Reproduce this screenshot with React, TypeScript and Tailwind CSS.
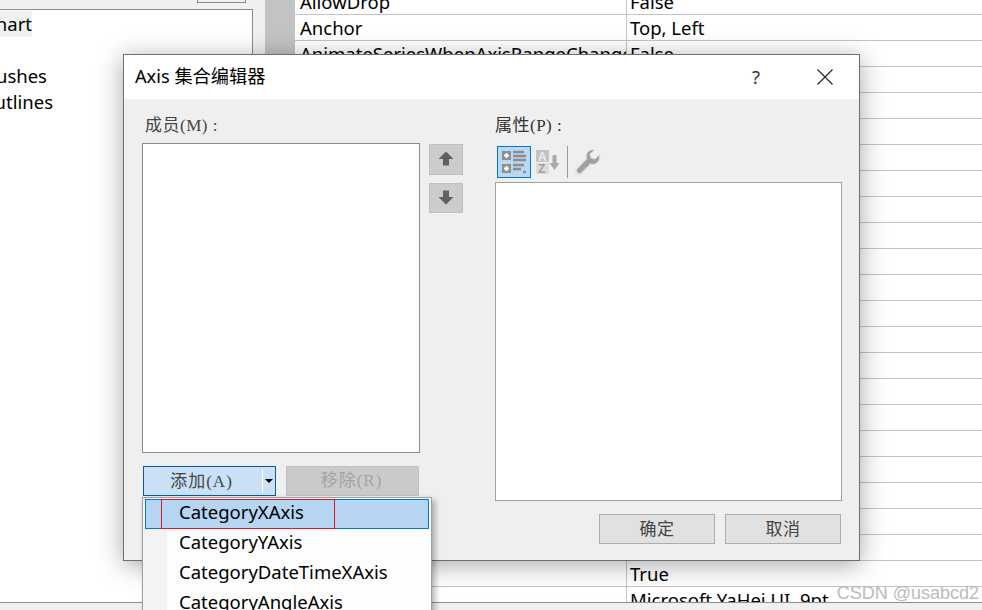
const sans = "font-['Noto_Sans','Noto_Sans_CJK_SC',sans-serif]";
const serifLabel = "font-['Liberation_Serif','Noto_Sans_CJK_SC',serif]";

const rows: [string, string][] = [
  ['AllowDrop', 'False'],
  ['Anchor', 'Top, Left'],
  ['AnimateSeriesWhenAxisRangeChanged', 'False'],
  ...Array.from({ length: 19 }, (): [string, string] => ['', '']),
  ['', 'True'],
  ['', 'Microsoft YaHei UI, 9pt'],
];

function CategorizedIcon() {
  return (
    <svg width="26" height="26" viewBox="0 0 26 26">
      <rect x="1" y="2" width="9" height="9" fill="#8f8f8f" />
      <path d="M3 6.500h5M5.500 4v5" stroke="#fff" strokeWidth="1.800" />
      <rect x="1" y="15" width="9" height="9" fill="#8f8f8f" />
      <path d="M3 19.500h5M5.500 17v5" stroke="#fff" strokeWidth="1.800" />
      <path d="M12 3h11M12 7h13M12 11h13M12 16h11M12 20h8M22 23h3" stroke="#8c8c8c" strokeWidth="2.400" />
    </svg>
  );
}

function SortIcon() {
  return (
    <svg width="26" height="26" viewBox="0 0 26 26">
      <rect x="1" y="1" width="13" height="12" fill="#c4c4c4" />
      <rect x="1" y="14" width="13" height="11" fill="#dcdcdc" />
      <text x="3" y="11.500" fontSize="12" fontWeight="700" fill="#ececec" fontFamily="Liberation Sans">A</text>
      <text x="3" y="24" fontSize="12" fontWeight="700" fill="#a0a0a0" fontFamily="Liberation Sans">Z</text>
      <path d="M19.500 6v12" stroke="#a9a9a9" strokeWidth="4" />
      <path d="M14.500 14l5 7 5-7z" fill="#a9a9a9" />
    </svg>
  );
}

function WrenchIcon() {
  return (
    <svg width="26" height="26" viewBox="0 0 26 26">
      <g fill="none" strokeLinecap="round">
        <path d="M4.500 21.500L14 12" stroke="#dcdcdc" strokeWidth="8" />
        <path d="M4.500 21.500L14 12" stroke="#a0a0a0" strokeWidth="5" />
      </g>
      <path
        d="M24.500 5.500l-4.500 4.500-4-1-1-4 4.500-4C14 0 10 4 11.500 9.500L13 14l3 1c5 1.500 10-3.500 8.500-9.500z"
        fill="#a0a0a0"
        stroke="#dcdcdc"
        strokeWidth="1"
      />
      <path d="M8 18l6-6" stroke="#a0a0a0" strokeWidth="5" />
    </svg>
  );
}

function ArrowButton({ down, h }: { down?: boolean; h: string }) {
  return (
    <div className={`flex w-[34px] items-center justify-center border border-[#c0c0c0] bg-[#cccccc] pb-[2px] ${h}`}>
      <svg width="16" height="15" viewBox="0 0 16 15" className={down ? 'rotate-180' : ''}>
        <path d="M8 0.500L0.500 8h4.500v6.500h6V8h4.500z" fill="#606060" />
      </svg>
    </div>
  );
}

function DialogButton({ label }: { label: string }) {
  return (
    <button className="h-[30px] w-[116px] border border-[#adadad] bg-[#e1e1e1] pb-[2px] text-[17px] leading-none tracking-[0.5px] text-[#444]">
      {label}
    </button>
  );
}

export default function App() {
  return (
    <div className={`relative flex h-[610px] w-[982px] flex-col overflow-hidden bg-white ${sans} text-[18.5px] text-black`}>
      <div className="flex h-[602px] shrink-0">
        {/* Left tree panel */}
        <div className="flex w-[265px] shrink-0 flex-col bg-[#f0f0f0]">
          <div className="h-[9px] shrink-0">
            <div className="ml-[197px] h-[3px] w-[49px] border border-t-0 border-[#8a8a8a]" />
          </div>
          <div className="flex w-[253px] flex-1 flex-col border-t border-r border-[#8a8a94] bg-white pt-[1px] leading-[26px]">
            <div className="flex h-[26px] w-[32px] justify-end overflow-hidden whitespace-nowrap bg-[#f0f0f0]">Chart</div>
            <div className="h-[26px]" />
            <div className="flex h-[26px] w-[47px] justify-end overflow-hidden whitespace-nowrap">Brushes</div>
            <div className="flex h-[26px] w-[53px] justify-end overflow-hidden whitespace-nowrap">Outlines</div>
          </div>
        </div>
        <div className="w-[30px] shrink-0 bg-[#c3c3c3]" />

        {/* Property grid */}
        <div className="min-w-0 flex-1 overflow-hidden">
          <div className="mt-[-11px] flex flex-col">
            {rows.map(([name, value], i) => (
              <div key={i} className="flex h-[26px] shrink-0 border-b border-[#c4c4c4] leading-[26px]">
                <div className="w-[332px] shrink-0 overflow-hidden whitespace-nowrap border-r border-[#c4c4c4] pl-[5px]">{name}</div>
                <div className="overflow-hidden whitespace-nowrap pl-[3px]">{value}</div>
              </div>
            ))}
          </div>
        </div>
      </div>
      <div className="flex-1 border-t border-[#8f8f8f] bg-[#f0f0f0]" />

      {/* Dialog */}
      <div className="absolute left-[123px] top-[54px] h-[507px] w-[737px] border border-[#6f6f6f] bg-[#efefef] shadow-[0_4px_24px_rgba(0,0,0,0.35)]">
        <div className="flex h-[44px] items-center bg-white pl-[11px]">
          <span className="w-[617px] shrink-0 text-[18.2px]">Axis 集合编辑器</span>
          <span className="text-[18.5px] text-[#333]">?</span>
          <svg width="16" height="16" viewBox="0 0 16 16" className="ml-[57px]">
            <path d="M0.500 0.500l15 15M15.500 0.500l-15 15" stroke="#222" strokeWidth="1.100" fill="none" />
          </svg>
        </div>
        <div className="flex pl-[18px] pt-[15px]">
          <div className="flex w-[278px] shrink-0 flex-col">
            <div className={`ml-[3px] h-[29px] pt-[2px] text-[17px] leading-[20px] tracking-[0.5px] text-[#444] ${serifLabel}`}>成员(M) :</div>
            <div className="h-[310px] border border-[#8a8a94] bg-white" />
            <div className="ml-[1px] mt-[13px] flex gap-[10px]">
              <div className="flex h-[30px] w-[133px] items-center border border-[#0b5a9e] bg-[#c9e0f6]">
                <div className={`flex-1 pr-[3px] pt-[1px] text-center text-[17px] tracking-[1px] text-[#444] ${serifLabel}`}>添加(A)</div>
                <div className="h-[24px] w-[1px] bg-white" />
                <div className="flex w-[12px] justify-center">
                  <div className="border-x-[4px] border-t-[4px] border-x-transparent border-t-black" />
                </div>
              </div>
              <div className={`flex h-[30px] w-[133px] items-center justify-center border border-[#c0c0c0] bg-[#cacaca] pr-[2px] text-[17px] tracking-[1px] text-[#a3a3a3] ${serifLabel}`}>
                移除(R)
              </div>
            </div>
          </div>
          <div className="ml-[9px] mt-[30px] flex w-[34px] shrink-0 flex-col gap-[8px]">
            <ArrowButton h="h-[31px]" />
            <ArrowButton h="h-[30px]" down />
          </div>
          <div className="ml-[32px] flex w-[347px] shrink-0 flex-col">
            <div className={`h-[32px] pt-[2px] text-[17px] leading-[20px] tracking-[0.5px] text-[#333] ${serifLabel}`}>属性(P) :</div>
            <div className="flex h-[32px] items-center pl-[2px]">
              <div className="flex h-[32px] w-[34px] items-center justify-center border border-[#0078d7] bg-[#b9d8f3]">
                <CategorizedIcon />
              </div>
              <div className="ml-[4px] flex w-[26px] justify-center">
                <SortIcon />
              </div>
              <div className="ml-[6px] h-[32px] w-[1px] bg-[#999]" />
              <div className="ml-[7px]">
                <WrenchIcon />
              </div>
            </div>
            <div className="mt-[4px] h-[319px] border border-[#a0a0a0] bg-white" />
            <div className="mt-[13px] flex justify-end gap-[10px] pr-[1px]">
              <DialogButton label="确定" />
              <DialogButton label="取消" />
            </div>
          </div>
        </div>

        {/* Add dropdown */}
        <div className="absolute left-[18px] top-[442px] h-[140px] w-[290px] border border-[#a0a0a0] bg-[linear-gradient(to_right,#f3f3f3_24px,#fdfdfd_24px)] pt-[1px] shadow-[3px_3px_6px_rgba(0,0,0,0.3)]">
          {['CategoryXAxis', 'CategoryYAxis', 'CategoryDateTimeXAxis', 'CategoryAngleAxis'].map((item, i) => (
            <div
              key={item}
              className={`relative mx-[2px] h-[30px] border pl-[33px] leading-[24px] ${i === 0 ? 'border-[#0078d7] bg-[#b5d5f2]' : 'border-transparent'}`}
            >
              {item}
              {i === 0 && <div className="absolute bottom-[-1px] left-[15px] top-[-1px] w-[174px] border border-[#e81123]" />}
            </div>
          ))}
        </div>
      </div>

      {/* Watermark */}
      <div className="absolute bottom-[6px] right-[3px] font-['Liberation_Sans',sans-serif] text-[18px] leading-[22px] text-[#bcbcbc]">
        CSDN @usabcd2
      </div>
    </div>
  );
}
